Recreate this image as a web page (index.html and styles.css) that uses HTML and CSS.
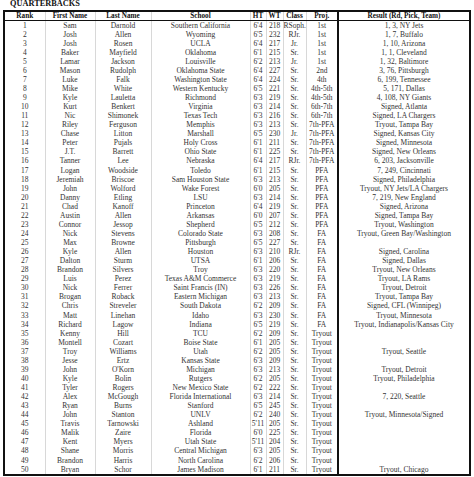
FILE: index.html
```html
<!DOCTYPE html>
<html>
<head>
<meta charset="utf-8">
<link rel="stylesheet" href="styles.css">
</head>
<body>
<div class="sheet">
<div class="title">QUARTERBACKS</div>
<table class="grid">
<colgroup>
<col class="c-rank"><col class="c-first"><col class="c-last"><col class="c-school"><col class="c-ht"><col class="c-wt"><col class="c-class"><col class="c-proj"><col class="c-result">
</colgroup>
<thead>
<tr><th>Rank</th><th>First Name</th><th>Last Name</th><th>School</th><th>HT</th><th>WT</th><th>Class</th><th>Proj.</th><th class="res">Result (Rd, Pick, Team)</th></tr>
</thead>
<tbody>
<tr><td>1</td><td>Sam</td><td>Darnold</td><td>Southern California</td><td>6'4</td><td>218</td><td>RSoph.</td><td>1st</td><td class="res">1, 3, NY Jets</td></tr>
<tr><td>2</td><td>Josh</td><td>Allen</td><td>Wyoming</td><td>6'5</td><td>232</td><td>RJr.</td><td>1st</td><td class="res">1, 7, Buffalo</td></tr>
<tr><td>3</td><td>Josh</td><td>Rosen</td><td>UCLA</td><td>6'4</td><td>217</td><td>Jr.</td><td>1st</td><td class="res">1, 10, Arizona</td></tr>
<tr><td>4</td><td>Baker</td><td>Mayfield</td><td>Oklahoma</td><td>6'1</td><td>215</td><td>Sr.</td><td>1st</td><td class="res">1, 1, Cleveland</td></tr>
<tr><td>5</td><td>Lamar</td><td>Jackson</td><td>Louisville</td><td>6'2</td><td>213</td><td>Jr.</td><td>1st</td><td class="res">1, 32, Baltimore</td></tr>
<tr><td>6</td><td>Mason</td><td>Rudolph</td><td>Oklahoma State</td><td>6'4</td><td>227</td><td>Sr.</td><td>2nd</td><td class="res">3, 76, Pittsburgh</td></tr>
<tr><td>7</td><td>Luke</td><td>Falk</td><td>Washington State</td><td>6'4</td><td>224</td><td>Sr.</td><td>4th</td><td class="res">6, 199, Tennessee</td></tr>
<tr><td>8</td><td>Mike</td><td>White</td><td>Western Kentucky</td><td>6'5</td><td>221</td><td>Sr.</td><td>4th-5th</td><td class="res">5, 171, Dallas</td></tr>
<tr><td>9</td><td>Kyle</td><td>Lauletta</td><td>Richmond</td><td>6'3</td><td>219</td><td>Sr.</td><td>4th-5th</td><td class="res">4, 108, NY Giants</td></tr>
<tr><td>10</td><td>Kurt</td><td>Benkert</td><td>Virginia</td><td>6'3</td><td>214</td><td>Sr.</td><td>6th-7th</td><td class="res">Signed, Atlanta</td></tr>
<tr><td>11</td><td>Nic</td><td>Shimonek</td><td>Texas Tech</td><td>6'3</td><td>216</td><td>Sr.</td><td>6th-7th</td><td class="res">Signed, LA Chargers</td></tr>
<tr><td>12</td><td>Riley</td><td>Ferguson</td><td>Memphis</td><td>6'3</td><td>213</td><td>Sr.</td><td>7th-PFA</td><td class="res">Tryout, Tampa Bay</td></tr>
<tr><td>13</td><td>Chase</td><td>Litton</td><td>Marshall</td><td>6'5</td><td>230</td><td>Jr.</td><td>7th-PFA</td><td class="res">Signed, Kansas City</td></tr>
<tr><td>14</td><td>Peter</td><td>Pujals</td><td>Holy Cross</td><td>6'1</td><td>211</td><td>Sr.</td><td>7th-PFA</td><td class="res">Signed, Minnesota</td></tr>
<tr><td>15</td><td>J.T.</td><td>Barrett</td><td>Ohio State</td><td>6'1</td><td>225</td><td>Sr.</td><td>7th-PFA</td><td class="res">Signed, New Orleans</td></tr>
<tr><td>16</td><td>Tanner</td><td>Lee</td><td>Nebraska</td><td>6'4</td><td>217</td><td>RJr.</td><td>7th-PFA</td><td class="res">6, 203, Jacksonville</td></tr>
<tr><td>17</td><td>Logan</td><td>Woodside</td><td>Toledo</td><td>6'1</td><td>215</td><td>Sr.</td><td>PFA</td><td class="res">7, 249, Cincinnati</td></tr>
<tr><td>18</td><td>Jeremiah</td><td>Briscoe</td><td>Sam Houston State</td><td>6'3</td><td>213</td><td>Sr.</td><td>PFA</td><td class="res">Signed, Philadelphia</td></tr>
<tr><td>19</td><td>John</td><td>Wolford</td><td>Wake Forest</td><td>6'0</td><td>205</td><td>Sr.</td><td>PFA</td><td class="res">Tryout, NY Jets/LA Chargers</td></tr>
<tr><td>20</td><td>Danny</td><td>Etling</td><td>LSU</td><td>6'3</td><td>214</td><td>Sr.</td><td>PFA</td><td class="res">7, 219, New England</td></tr>
<tr><td>21</td><td>Chad</td><td>Kanoff</td><td>Princeton</td><td>6'4</td><td>219</td><td>Sr.</td><td>PFA</td><td class="res">Signed, Arizona</td></tr>
<tr><td>22</td><td>Austin</td><td>Allen</td><td>Arkansas</td><td>6'0</td><td>207</td><td>Sr.</td><td>PFA</td><td class="res">Signed, Tampa Bay</td></tr>
<tr><td>23</td><td>Connor</td><td>Jessop</td><td>Shepherd</td><td>6'5</td><td>212</td><td>Sr.</td><td>PFA</td><td class="res">Tryout, Washington</td></tr>
<tr><td>24</td><td>Nick</td><td>Stevens</td><td>Colorado State</td><td>6'3</td><td>208</td><td>Sr.</td><td>FA</td><td class="res">Tryout, Green Bay/Washington</td></tr>
<tr><td>25</td><td>Max</td><td>Browne</td><td>Pittsburgh</td><td>6'5</td><td>227</td><td>Sr.</td><td>FA</td><td class="res"></td></tr>
<tr><td>26</td><td>Kyle</td><td>Allen</td><td>Houston</td><td>6'3</td><td>210</td><td>RJr.</td><td>FA</td><td class="res">Signed, Carolina</td></tr>
<tr><td>27</td><td>Dalton</td><td>Sturm</td><td>UTSA</td><td>6'1</td><td>206</td><td>Sr.</td><td>FA</td><td class="res">Signed, Dallas</td></tr>
<tr><td>28</td><td>Brandon</td><td>Silvers</td><td>Troy</td><td>6'3</td><td>220</td><td>Sr.</td><td>FA</td><td class="res">Tryout, New Orleans</td></tr>
<tr><td>29</td><td>Luis</td><td>Perez</td><td>Texas A&amp;M Commerce</td><td>6'3</td><td>219</td><td>Sr.</td><td>FA</td><td class="res">Tryout, LA Rams</td></tr>
<tr><td>30</td><td>Nick</td><td>Ferrer</td><td>Saint Francis (IN)</td><td>6'3</td><td>226</td><td>Sr.</td><td>FA</td><td class="res">Tryout, Detroit</td></tr>
<tr><td>31</td><td>Brogan</td><td>Roback</td><td>Eastern Michigan</td><td>6'3</td><td>213</td><td>Sr.</td><td>FA</td><td class="res">Tryout, Tampa Bay</td></tr>
<tr><td>32</td><td>Chris</td><td>Streveler</td><td>South Dakota</td><td>6'2</td><td>209</td><td>Sr.</td><td>FA</td><td class="res">Signed, CFL (Winnipeg)</td></tr>
<tr><td>33</td><td>Matt</td><td>Linehan</td><td>Idaho</td><td>6'3</td><td>230</td><td>Sr.</td><td>FA</td><td class="res">Tryout, Minnesota</td></tr>
<tr><td>34</td><td>Richard</td><td>Lagow</td><td>Indiana</td><td>6'5</td><td>219</td><td>Sr.</td><td>FA</td><td class="res">Tryout, Indianapolis/Kansas City</td></tr>
<tr><td>35</td><td>Kenny</td><td>Hill</td><td>TCU</td><td>6'2</td><td>209</td><td>Sr.</td><td>Tryout</td><td class="res"></td></tr>
<tr><td>36</td><td>Montell</td><td>Cozart</td><td>Boise State</td><td>6'1</td><td>205</td><td>Sr.</td><td>Tryout</td><td class="res"></td></tr>
<tr><td>37</td><td>Troy</td><td>Williams</td><td>Utah</td><td>6'2</td><td>205</td><td>Sr.</td><td>Tryout</td><td class="res">Tryout, Seattle</td></tr>
<tr><td>38</td><td>Jesse</td><td>Ertz</td><td>Kansas State</td><td>6'3</td><td>209</td><td>Sr.</td><td>Tryout</td><td class="res"></td></tr>
<tr><td>39</td><td>John</td><td>O'Korn</td><td>Michigan</td><td>6'3</td><td>213</td><td>Sr.</td><td>Tryout</td><td class="res">Tryout, Detroit</td></tr>
<tr><td>40</td><td>Kyle</td><td>Bolin</td><td>Rutgers</td><td>6'2</td><td>205</td><td>Sr.</td><td>Tryout</td><td class="res">Tryout, Philadelphia</td></tr>
<tr><td>41</td><td>Tyler</td><td>Rogers</td><td>New Mexico State</td><td>6'2</td><td>222</td><td>Sr.</td><td>Tryout</td><td class="res"></td></tr>
<tr><td>42</td><td>Alex</td><td>McGough</td><td>Florida International</td><td>6'3</td><td>214</td><td>Sr.</td><td>Tryout</td><td class="res">7, 220, Seattle</td></tr>
<tr><td>43</td><td>Ryan</td><td>Burns</td><td>Stanford</td><td>6'5</td><td>245</td><td>Sr.</td><td>Tryout</td><td class="res"></td></tr>
<tr><td>44</td><td>John</td><td>Stanton</td><td>UNLV</td><td>6'2</td><td>240</td><td>Sr.</td><td>Tryout</td><td class="res">Tryout, Minnesota/Signed</td></tr>
<tr><td>45</td><td>Travis</td><td>Tarnowski</td><td>Ashland</td><td>5'11</td><td>205</td><td>Sr.</td><td>Tryout</td><td class="res"></td></tr>
<tr><td>46</td><td>Malik</td><td>Zaire</td><td>Florida</td><td>6'0</td><td>225</td><td>Sr.</td><td>Tryout</td><td class="res"></td></tr>
<tr><td>47</td><td>Kent</td><td>Myers</td><td>Utah State</td><td>5'11</td><td>204</td><td>Sr.</td><td>Tryout</td><td class="res"></td></tr>
<tr><td>48</td><td>Shane</td><td>Morris</td><td>Central Michigan</td><td>6'3</td><td>205</td><td>Sr.</td><td>Tryout</td><td class="res"></td></tr>
<tr><td>49</td><td>Brandon</td><td>Harris</td><td>North Carolina</td><td>6'2</td><td>206</td><td>Sr.</td><td>Tryout</td><td class="res"></td></tr>
<tr><td>50</td><td>Bryan</td><td>Schor</td><td>James Madison</td><td>6'1</td><td>211</td><td>Sr.</td><td>Tryout</td><td class="res">Tryout, Chicago</td></tr>
</tbody>
</table>
</div>
</body>
</html>
```
FILE: styles.css
```css
html, body {
  margin: 0;
  padding: 0;
  background: #fff;
}
.sheet {
  padding: 0 5px 0 3px;
  font-family: "Liberation Serif", "Times New Roman", serif;
  color: #333;
}
.title {
  margin-left: 7px;
  height: 8px;
  line-height: 8px;
  font-size: 8.3px;
  font-weight: bold;
  color: #111;
  margin-bottom: 2px;
  white-space: nowrap;
}
.grid {
  table-layout: fixed;
  width: 466px;
  border-collapse: collapse;
  border: 2px solid #111;
}
.c-rank { width: 41px; }
.c-first { width: 50px; }
.c-last { width: 56px; }
.c-school { width: 99px; }
.c-ht { width: 16px; }
.c-wt { width: 17px; }
.c-class { width: 23px; }
.c-proj { width: 32px; }
.c-result { width: 132px; }
.grid th, .grid td {
  padding: 0;
  text-align: center;
  white-space: nowrap;
  overflow: visible;
  border-left: 1px solid #d8d8d8;
}
.grid th:first-child, .grid td:first-child {
  border-left: none;
}
.grid th {
  font-size: 7.2px;
  font-weight: bold;
  color: #111;
  height: 6px;
  line-height: 6px;
  padding-top: 1px;
  padding-bottom: 0.5px;
  border-bottom: 1px solid #111;
}
.grid td {
  font-size: 7.5px;
  height: 9.07px;
  line-height: 9.07px;
}
.grid .res {
  border-left: 2px solid #111;
}
```
